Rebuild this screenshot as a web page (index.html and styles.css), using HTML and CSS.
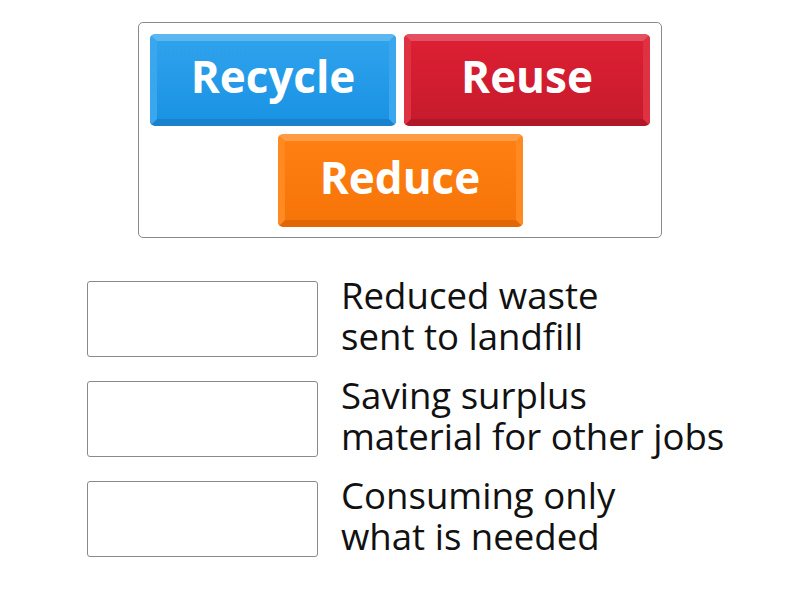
FILE: index.html
```html
<!DOCTYPE html>
<html>
<head>
<meta charset="utf-8">
<link rel="stylesheet" href="styles.css">
</head>
<body>
<div class="bank">
  <div class="tile blue">Recycle</div>
  <div class="tile red">Reuse</div>
  <div class="tile orange">Reduce</div>
</div>
<div class="rows">
  <div class="row"><div class="slot"></div><div class="label">Reduced waste<br>sent to landfill</div></div>
  <div class="row"><div class="slot"></div><div class="label">Saving surplus<br>material for other jobs</div></div>
  <div class="row"><div class="slot"></div><div class="label">Consuming only<br>what is needed</div></div>
</div>
</body>
</html>
```
FILE: styles.css
```css
html, body {
  margin: 0;
  padding: 0;
  background: #fff;
  font-family: "Open Sans", "Liberation Sans", sans-serif;
}
.bank {
  box-sizing: border-box;
  margin: 22px 0 0 138px;
  width: 524px;
  height: 216px;
  border: 1px solid #8a8a8a;
  border-radius: 5px;
  padding: 11px 10px 10px 10px;
  display: flex;
  flex-wrap: wrap;
  justify-content: center;
  align-content: flex-start;
  gap: 8px 8px;
}
.tile {
  box-sizing: border-box;
  width: 246px;
  height: 92px;
  border-radius: 5px;
  border: 7px solid;
  color: #fff;
  font-weight: 700;
  font-size: 44px;
  line-height: 1;
  display: flex;
  align-items: center;
  justify-content: center;
  padding-bottom: 8px;
}
.blue {
  background: linear-gradient(#2fa2ec, #1a93e4);
  border-color: #5cb7f1 #3aa6ee #1a82cc #3aa6ee;
}
.red {
  background: linear-gradient(#dd1f33, #c71b2d);
  border-color: #e4505f #de3142 #b01828 #de3142;
}
.orange {
  background: linear-gradient(#ff7f12, #f77508);
  border-color: #ff9a45 #ff8a22 #e06606 #ff8a22;
  height: 93px;
  width: 245px;
}
.rows {
  margin: 43px 0 0 87px;
  display: flex;
  flex-direction: column;
  gap: 24px;
}
.row {
  height: 76px;
  display: flex;
  align-items: center;
  gap: 23px;
}
.slot {
  box-sizing: border-box;
  width: 231px;
  height: 76px;
  border: 1px solid #8a8a8a;
  border-radius: 3px;
}
.label {
  font-size: 36.6px;
  line-height: 41px;
  color: #111;
  margin-top: -6px;
}
```
